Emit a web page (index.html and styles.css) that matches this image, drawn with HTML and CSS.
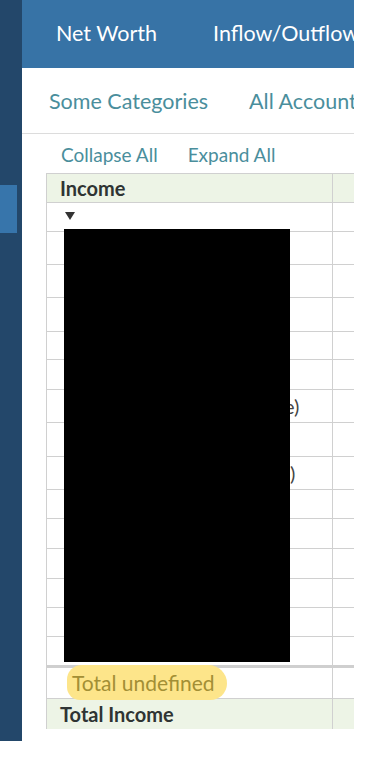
FILE: index.html
```html
<!DOCTYPE html>
<html>
<head>
<meta charset="utf-8">
<link rel="stylesheet" href="styles.css">
</head>
<body>
<div class="app">
  <aside class="sidebar"><div class="side-active"></div></aside>
  <main class="main">
    <nav class="topnav">
      <span class="nav-item">Net Worth</span>
      <span class="nav-item">Inflow/Outflow</span>
    </nav>
    <div class="subnav">
      <span class="sub-item">Some Categories</span>
      <span class="sub-item">All Accounts</span>
    </div>
    <div class="toolbar">
      <span class="tool-link">Collapse All</span>
      <span class="tool-link">Expand All</span>
    </div>
    <div class="table-wrap">
      <div class="row head"><div class="c1">Income</div><div class="c2"></div></div>
      <div class="row toggle"><div class="c1"><span class="tri"></span></div><div class="c2"></div></div>
      <div class="row" style="height:33px"><div class="c1"></div><div class="c2"></div></div>
      <div class="row" style="height:33px"><div class="c1"></div><div class="c2"></div></div>
      <div class="row" style="height:34px"><div class="c1"></div><div class="c2"></div></div>
      <div class="row" style="height:28px"><div class="c1"></div><div class="c2"></div></div>
      <div class="row" style="height:30px"><div class="c1"></div><div class="c2"></div></div>
      <div class="row" style="height:33px"><div class="c1 peek"><span class="peek-text">e)</span></div><div class="c2"></div></div>
      <div class="row" style="height:34px"><div class="c1"></div><div class="c2"></div></div>
      <div class="row" style="height:33px"><div class="c1 peek"><span class="peek-text paren">)</span></div><div class="c2"></div></div>
      <div class="row" style="height:29px"><div class="c1"></div><div class="c2"></div></div>
      <div class="row" style="height:30px"><div class="c1"></div><div class="c2"></div></div>
      <div class="row" style="height:30px"><div class="c1"></div><div class="c2"></div></div>
      <div class="row" style="height:29px"><div class="c1"></div><div class="c2"></div></div>
      <div class="row" style="height:29px"><div class="c1"></div><div class="c2"></div></div>
      <div class="row last" style="height:31px"><div class="c1"></div><div class="c2"></div></div>
      <div class="row total-undef"><div class="c1"><span class="hl">Total undefined</span></div><div class="c2"></div></div>
      <div class="row total"><div class="c1">Total Income</div><div class="c2"></div></div>
      <div class="redact"></div>
    </div>
  </main>
</div>
</body>
</html>
```
FILE: styles.css
```css
html, body {
  margin: 0;
  padding: 0;
  background: #ffffff;
  font-family: Lato, "Open Sans", sans-serif;
}
.app {
  display: flex;
  align-items: flex-start;
  width: 375px;
  height: 760px;
  overflow: hidden;
}
.sidebar {
  width: 22px;
  height: 741px;
  background: #23476a;
  flex: none;
  padding-top: 185px;
  box-sizing: border-box;
}
.side-active {
  width: 17px;
  height: 48px;
  background: #3775ab;
}
.main {
  width: 332px;
  flex: none;
  overflow: hidden;
}
.topnav {
  height: 68px;
  background: #3773a6;
  display: flex;
  align-items: center;
  gap: 56px;
  padding-left: 34px;
  white-space: nowrap;
  overflow: hidden;
}
.nav-item {
  color: #ffffff;
  font-size: 21.5px;
  position: relative;
  top: -1px;
}
.subnav {
  height: 65px;
  display: flex;
  align-items: center;
  gap: 41px;
  padding-left: 27px;
  white-space: nowrap;
  overflow: hidden;
  border-bottom: 1px solid #dcdcdc;
}
.sub-item {
  color: #4a8e9c;
  font-size: 21.5px;
}
.toolbar {
  height: 39px;
  display: flex;
  align-items: center;
  gap: 30px;
  padding-left: 39px;
  white-space: nowrap;
}
.tool-link {
  color: #4a8e9c;
  font-size: 19px;
  position: relative;
  top: 1px;
}
.table-wrap {
  position: relative;
  margin-left: 24px;
  width: 308px;
  border-left: 1px solid #d0d0d0;
}
.row {
  display: flex;
  border-bottom: 1px solid #d0d0d0;
  box-sizing: border-box;
}
.c1 {
  width: 286px;
  border-right: 1px solid #d0d0d0;
  display: flex;
  align-items: center;
  padding-left: 13px;
  box-sizing: border-box;
  font-size: 20px;
  color: #333333;
  white-space: nowrap;
}
.c2 {
  flex: 1;
}
.head {
  height: 30px;
  background: #edf4e6;
  border-top: 1px solid #d0d0d0;
}
.head .c1 {
  font-weight: 700;
  font-size: 20px;
  color: #2f3433;
}
.toggle {
  height: 29px;
}
.tri {
  display: inline-block;
  width: 0;
  height: 0;
  border-left: 5px solid transparent;
  border-right: 5px solid transparent;
  border-top: 8px solid #333333;
  margin-left: 5px;
  margin-top: -3px;
}
.peek .peek-text {
  margin-left: 224px;
  color: #444444;
}
.peek .paren {
  margin-left: 230px;
}
.last {
  border-bottom: 3px solid #cfcfcf;
}
.total-undef {
  height: 31px;
}
.total-undef .c1 {
  padding-left: 25px;
}
.hl {
  background: #fde58a;
  color: #a38f35;
  font-size: 21px;
  padding: 5px 12px 5px 5px;
  margin-left: -5px;
  border-radius: 16px 20px 18px 14px;
  position: relative;
  top: -1px;
}
.total {
  height: 30px;
  background: #edf4e6;
  border-bottom: none;
}
.total .c1 {
  font-weight: 700;
  font-size: 20px;
  color: #2f3433;
}
.redact {
  position: absolute;
  left: 17px;
  top: 56px;
  width: 226px;
  height: 433px;
  background: #000000;
}
```
